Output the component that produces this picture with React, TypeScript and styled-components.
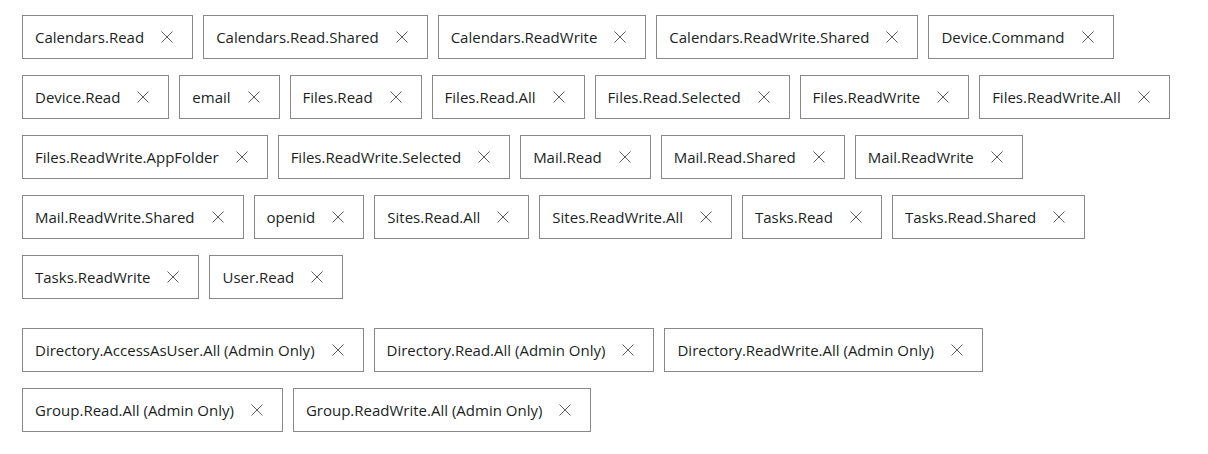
import React from "react";
import styled, { createGlobalStyle } from "styled-components";

const GlobalStyle = createGlobalStyle`
  body {
    margin: 0;
    background: #ffffff;
    font-family: "Open Sans", "Noto Sans", sans-serif;
  }
`;

const Page = styled.div`
  padding: 15px 22px;
  display: flex;
  flex-direction: column;
  gap: 29px;
`;

const Group = styled.div`
  display: flex;
  flex-wrap: wrap;
  column-gap: 10px;
  row-gap: 16px;
`;

const Chip = styled.div`
  display: inline-flex;
  align-items: center;
  box-sizing: border-box;
  height: 44px;
  padding: 0 19px 1px 12px;
  gap: 17px;
  border: 1px solid #8a8886;
  background: #fff;
  color: #201f1e;
  font-size: 15px;
`;

const Label = styled.span`
  white-space: nowrap;
`;

const Remove = styled.button`
  display: flex;
  align-items: center;
  justify-content: center;
  width: 12px;
  height: 12px;
  padding: 0;
  border: none;
  background: transparent;
  color: #605e5c;
  cursor: pointer;
`;

const user = [
  "Calendars.Read",
  "Calendars.Read.Shared",
  "Calendars.ReadWrite",
  "Calendars.ReadWrite.Shared",
  "Device.Command",
  "Device.Read",
  "email",
  "Files.Read",
  "Files.Read.All",
  "Files.Read.Selected",
  "Files.ReadWrite",
  "Files.ReadWrite.All",
  "Files.ReadWrite.AppFolder",
  "Files.ReadWrite.Selected",
  "Mail.Read",
  "Mail.Read.Shared",
  "Mail.ReadWrite",
  "Mail.ReadWrite.Shared",
  "openid",
  "Sites.Read.All",
  "Sites.ReadWrite.All",
  "Tasks.Read",
  "Tasks.Read.Shared",
  "Tasks.ReadWrite",
  "User.Read",
];

const admin = [
  "Directory.AccessAsUser.All (Admin Only)",
  "Directory.Read.All (Admin Only)",
  "Directory.ReadWrite.All (Admin Only)",
  "Group.Read.All (Admin Only)",
  "Group.ReadWrite.All (Admin Only)",
];

function CloseIcon() {
  return (
    <svg width="12" height="12" viewBox="0 0 12 12">
      <path d="M0.5 0.5 L11.5 11.5 M11.5 0.5 L0.5 11.5" stroke="currentColor" strokeWidth="1" fill="none" />
    </svg>
  );
}

function ScopeChip({ name }: { name: string }) {
  return (
    <Chip>
      <Label>{name}</Label>
      <Remove aria-label={`Remove ${name}`}>
        <CloseIcon />
      </Remove>
    </Chip>
  );
}

export default function App() {
  return (
    <>
      <GlobalStyle />
      <Page>
        <Group>
          {user.map((s) => (
            <ScopeChip key={s} name={s} />
          ))}
        </Group>
        <Group>
          {admin.map((s) => (
            <ScopeChip key={s} name={s} />
          ))}
        </Group>
      </Page>
    </>
  );
}
